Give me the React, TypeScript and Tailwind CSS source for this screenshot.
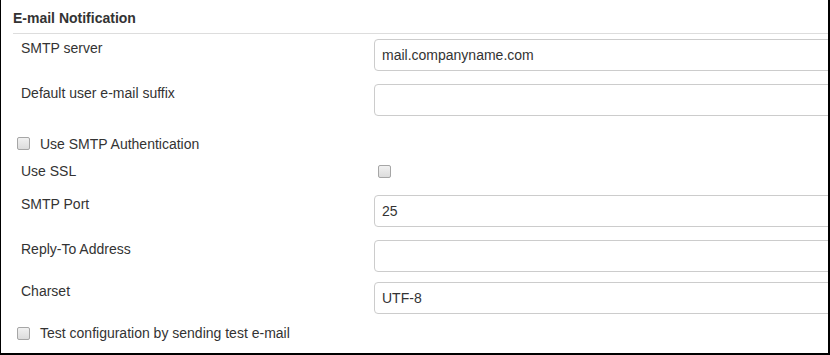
const font = { fontFamily: '"Liberation Sans", Arial, sans-serif' };

const Check = ({ className = "" }: { className?: string }) => (
  <span
    className={`block w-[13px] h-[13px] shrink-0 rounded-[2px] border border-[#a6a6a6] bg-gradient-to-b from-[#f1f1f1] to-[#dcdcdc] ${className}`}
  />
);

const Field = ({ value = "" }: { value?: string }) => (
  <div className="mt-[5px] h-[32px] w-[480px] shrink-0 rounded-[4px] border border-[#cccccc] bg-white px-[7px] flex items-center text-[14px] text-[#333]">
    {value}
  </div>
);

const InputRow = ({ label, value, h = "h-[45px]" }: { label: string; value?: string; h?: string }) => (
  <div className={`flex items-start ${h}`}>
    <div className="w-[373px] shrink-0 pl-[20px] pt-[4px] leading-5 text-[14px] text-[#333]">{label}</div>
    <Field value={value} />
  </div>
);

export default function App() {
  return (
    <div style={font} className="w-[830px] h-[355px] bg-white border-l border-r-2 border-b-2 border-black overflow-hidden">
      {/* Header */}
      <div className="h-[34px] pl-[12px]">
        <div className="h-[34px] pt-[8px] border-b border-[#dddddd] text-[14px] leading-5 font-bold text-[#333]">
          E-mail Notification
        </div>
      </div>

      <InputRow label="SMTP server" value="mail.companyname.com" />
      <InputRow label="Default user e-mail suffix" />

      {/* Use SMTP Authentication */}
      <div className="flex items-start h-[32px] pl-[16px]">
        <Check className="mt-[13px]" />
        <span className="ml-[10px] pt-[10px] leading-5 text-[14px] text-[#333]">Use SMTP Authentication</span>
      </div>

      {/* Use SSL */}
      <div className="flex items-start h-[34px]">
        <div className="w-[373px] shrink-0 pl-[20px] pt-[5px] leading-5 text-[14px] text-[#333]">Use SSL</div>
        <Check className="mt-[9px] ml-[4px]" />
      </div>

      <InputRow label="SMTP Port" value="25" />
      <InputRow label="Reply-To Address" h="h-[42px]" />
      <InputRow label="Charset" value="UTF-8" h="h-[41px]" />

      {/* Test configuration */}
      <div className="flex items-center h-[30px] pl-[16px]">
        <Check />
        <span className="ml-[10px] leading-5 text-[14px] text-[#333]">Test configuration by sending test e-mail</span>
      </div>
    </div>
  );
}
